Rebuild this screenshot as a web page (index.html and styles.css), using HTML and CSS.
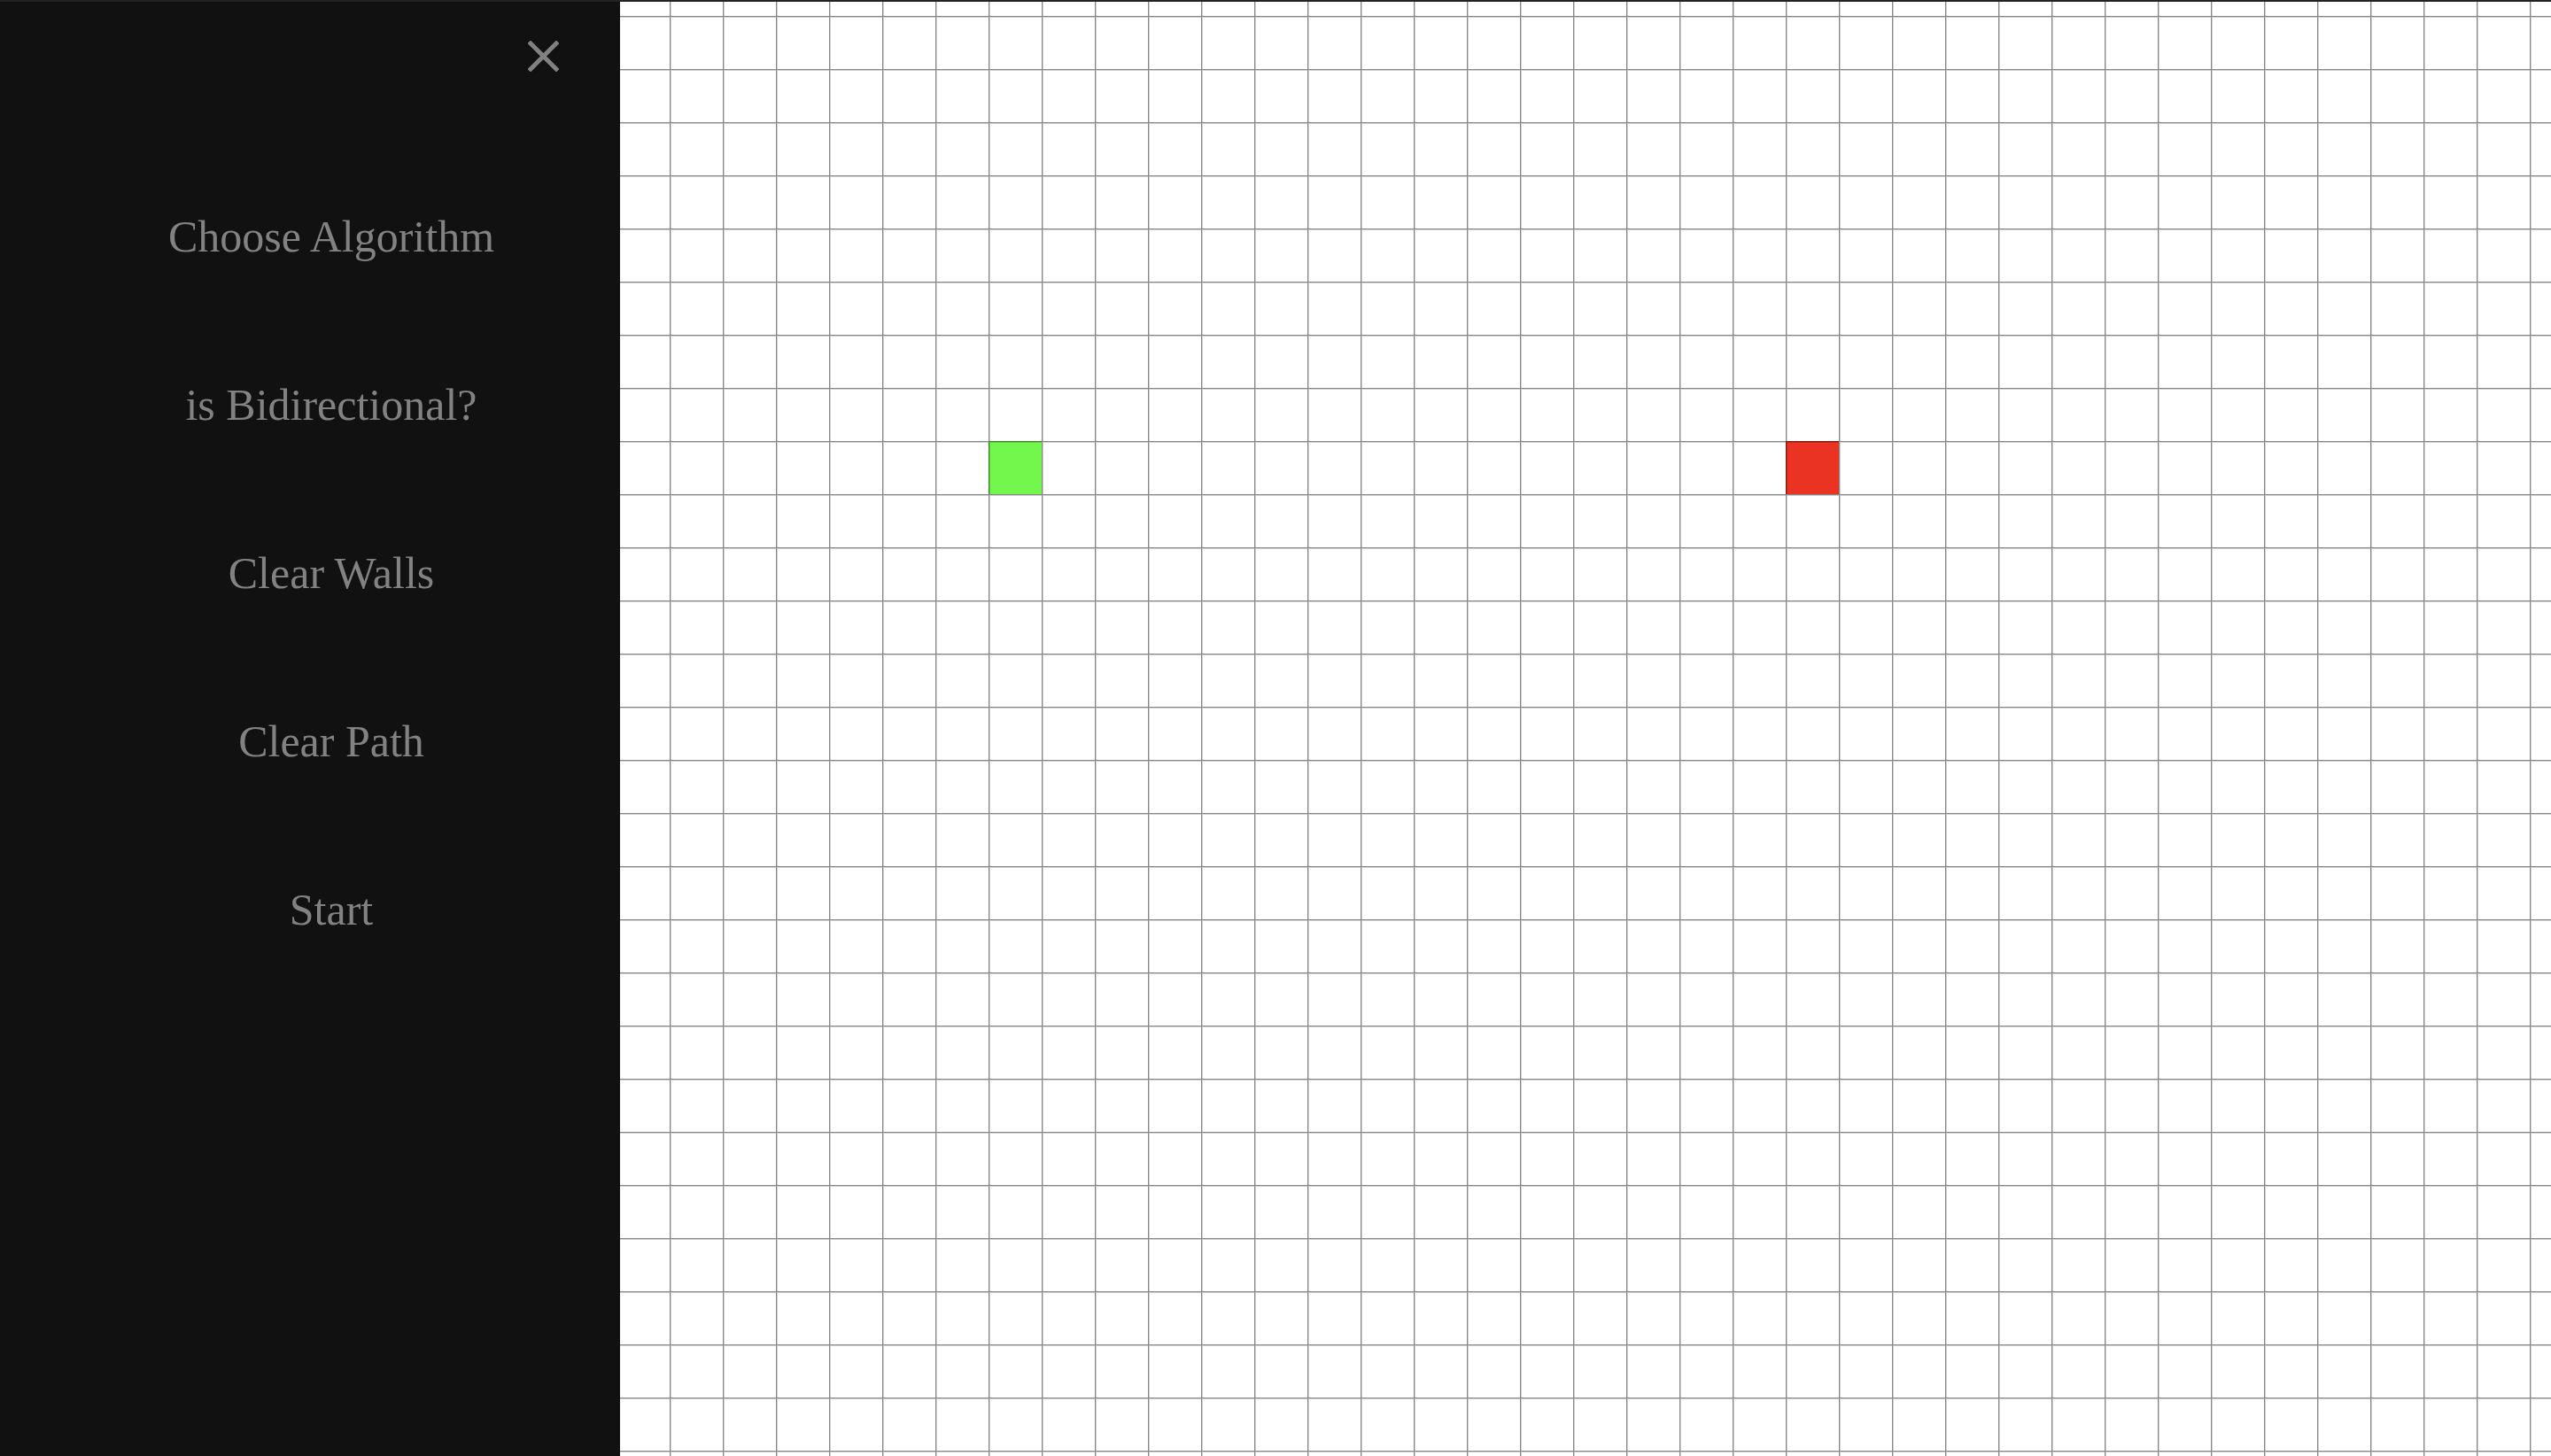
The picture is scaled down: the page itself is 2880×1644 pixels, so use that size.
FILE: index.html
```html
<!DOCTYPE html>
<html lang="en">
<head>
<meta charset="utf-8">
<title>Pathfinding Visualizer</title>
<link rel="stylesheet" href="styles.css">
</head>
<body>
<div class="topbar"></div>
<div class="app">
  <nav class="sidenav">
    <a class="closebtn" href="#" aria-label="Close">
      <svg width="35" height="35" viewBox="0 0 35 35"><path d="M3 3 L32 32 M32 3 L3 32" stroke="#818181" stroke-width="5" stroke-linecap="square" fill="none"/></svg>
    </a>
    <a class="navlink" href="#">Choose Algorithm</a>
    <a class="navlink" href="#">is Bidirectional?</a>
    <a class="navlink" href="#">Clear Walls</a>
    <a class="navlink" href="#">Clear Path</a>
    <a class="navlink" href="#">Start</a>
  </nav>
  <main class="board">
    <div class="grid" id="grid"></div>
  </main>
</div>
<script src="script.js"></script>
</body>
</html>
```
FILE: styles.css
```css
html, body {
  margin: 0;
  padding: 0;
  background: #ffffff;
}
body {
  width: 2880px;
  height: 1644px;
  overflow: hidden;
  display: flex;
  flex-direction: column;
  font-family: "Liberation Serif", "Times New Roman", serif;
}
.topbar {
  height: 2px;
  background: #232323;
  flex: none;
}
.app {
  flex: 1;
  display: flex;
  min-height: 0;
}
.sidenav {
  position: relative;
  width: 700px;
  flex: none;
  background: #111111;
  box-sizing: border-box;
  padding-top: 221px;
  display: flex;
  flex-direction: column;
  gap: 101px;
}
.navlink {
  display: block;
  padding: 16px 16px 16px 64px;
  font-size: 50px;
  line-height: 57px;
  color: #828282;
  text-decoration: none;
  text-align: center;
}
.closebtn {
  position: absolute;
  top: 44px;
  right: 69px;
  width: 35px;
  height: 35px;
  display: block;
}
.closebtn svg {
  display: block;
}
.board {
  flex: 1;
  overflow: hidden;
  position: relative;
  background: #ffffff;
}
.grid {
  display: grid;
  grid-template-columns: repeat(37, 60px);
  grid-auto-rows: 60px;
  margin-left: -4px;
  margin-top: -44px;
  width: max-content;
}
.cell {
  box-sizing: border-box;
  border-left: 1px solid rgba(0, 0, 0, 0.47);
  border-top: 1px solid rgba(0, 0, 0, 0.47);
  box-shadow: inset 1px 1px 0 rgba(0, 0, 0, 0.18);
  background: #ffffff;
}
.cell.start {
  background: #74f74c;
}
.cell.end {
  background: #ea3323;
}
```
FILE: script.js
```js
(function () {
  var grid = document.getElementById('grid');
  var cols = 37, rows = 29;
  var frag = document.createDocumentFragment();
  for (var r = 0; r < rows; r++) {
    for (var c = 0; c < cols; c++) {
      var d = document.createElement('div');
      d.className = 'cell';
      if (r === 9 && c === 7) d.className += ' start';
      if (r === 9 && c === 22) d.className += ' end';
      frag.appendChild(d);
    }
  }
  grid.appendChild(frag);
})();
```
